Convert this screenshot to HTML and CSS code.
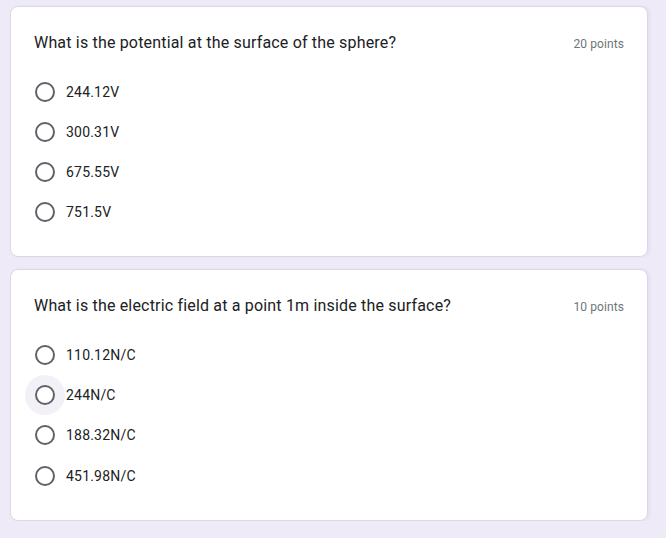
FILE: index.html
```html
<!DOCTYPE html>
<html lang="en">
<head>
<meta charset="utf-8">
<title>Quiz</title>
<link rel="stylesheet" href="styles.css">
</head>
<body>
<main class="page">
  <section class="card">
    <div class="card-head">
      <h2 class="question">What is the potential at the surface of the sphere?</h2>
      <span class="points">20 points</span>
    </div>
    <ul class="options">
      <li class="option"><span class="radio"></span><span class="label">244.12V</span></li>
      <li class="option"><span class="radio"></span><span class="label">300.31V</span></li>
      <li class="option"><span class="radio"></span><span class="label">675.55V</span></li>
      <li class="option"><span class="radio"></span><span class="label">751.5V</span></li>
    </ul>
  </section>
  <section class="card card-second">
    <div class="card-head">
      <h2 class="question">What is the electric field at a point 1m inside the surface?</h2>
      <span class="points">10 points</span>
    </div>
    <ul class="options">
      <li class="option"><span class="radio"></span><span class="label">110.12N/C</span></li>
      <li class="option"><span class="radio hover"></span><span class="label">244N/C</span></li>
      <li class="option"><span class="radio"></span><span class="label">188.32N/C</span></li>
      <li class="option"><span class="radio"></span><span class="label">451.98N/C</span></li>
    </ul>
  </section>
</main>
</body>
</html>
```

FILE: styles.css
```css
html, body {
  margin: 0;
  padding: 0;
  background: #efeaf7;
}
body {
  font-family: Roboto, "Liberation Sans", sans-serif;
  color: #202124;
}
.page {
  display: flex;
  flex-direction: column;
  gap: 12px;
  padding: 6px 18px 0 10px;
}
.card {
  background: #ffffff;
  border: 1px solid #dcd8e3;
  border-radius: 8px;
  padding: 24px 23px 24px 23px;
  box-shadow: 2px 0 3px rgba(120, 100, 160, 0.08);
}
.card-second .option:last-child {
  height: 41px;
  padding-top: 1px;
  box-sizing: border-box;
}
.card-head {
  display: flex;
  justify-content: space-between;
  align-items: baseline;
}
.question {
  margin: 0;
  font-size: 16px;
  font-weight: 400;
  line-height: 24px;
  letter-spacing: 0.18px;
  color: #202124;
}
.points {
  font-size: 12px;
  color: #70757a;
  letter-spacing: 0.1px;
}
.options {
  list-style: none;
  margin: 17px 0 0 0;
  padding: 0;
}
.option {
  display: flex;
  align-items: center;
  height: 40px;
  font-size: 14px;
  letter-spacing: 0.2px;
}
.radio {
  box-sizing: border-box;
  width: 20px;
  height: 20px;
  border: 2px solid #5f6368;
  border-radius: 50%;
  margin-left: 1px;
  margin-right: 11px;
  flex: none;
}
.radio.hover {
  box-shadow: 0 0 0 10px #f3f0f7;
}
.label {
  color: #202124;
}
```
